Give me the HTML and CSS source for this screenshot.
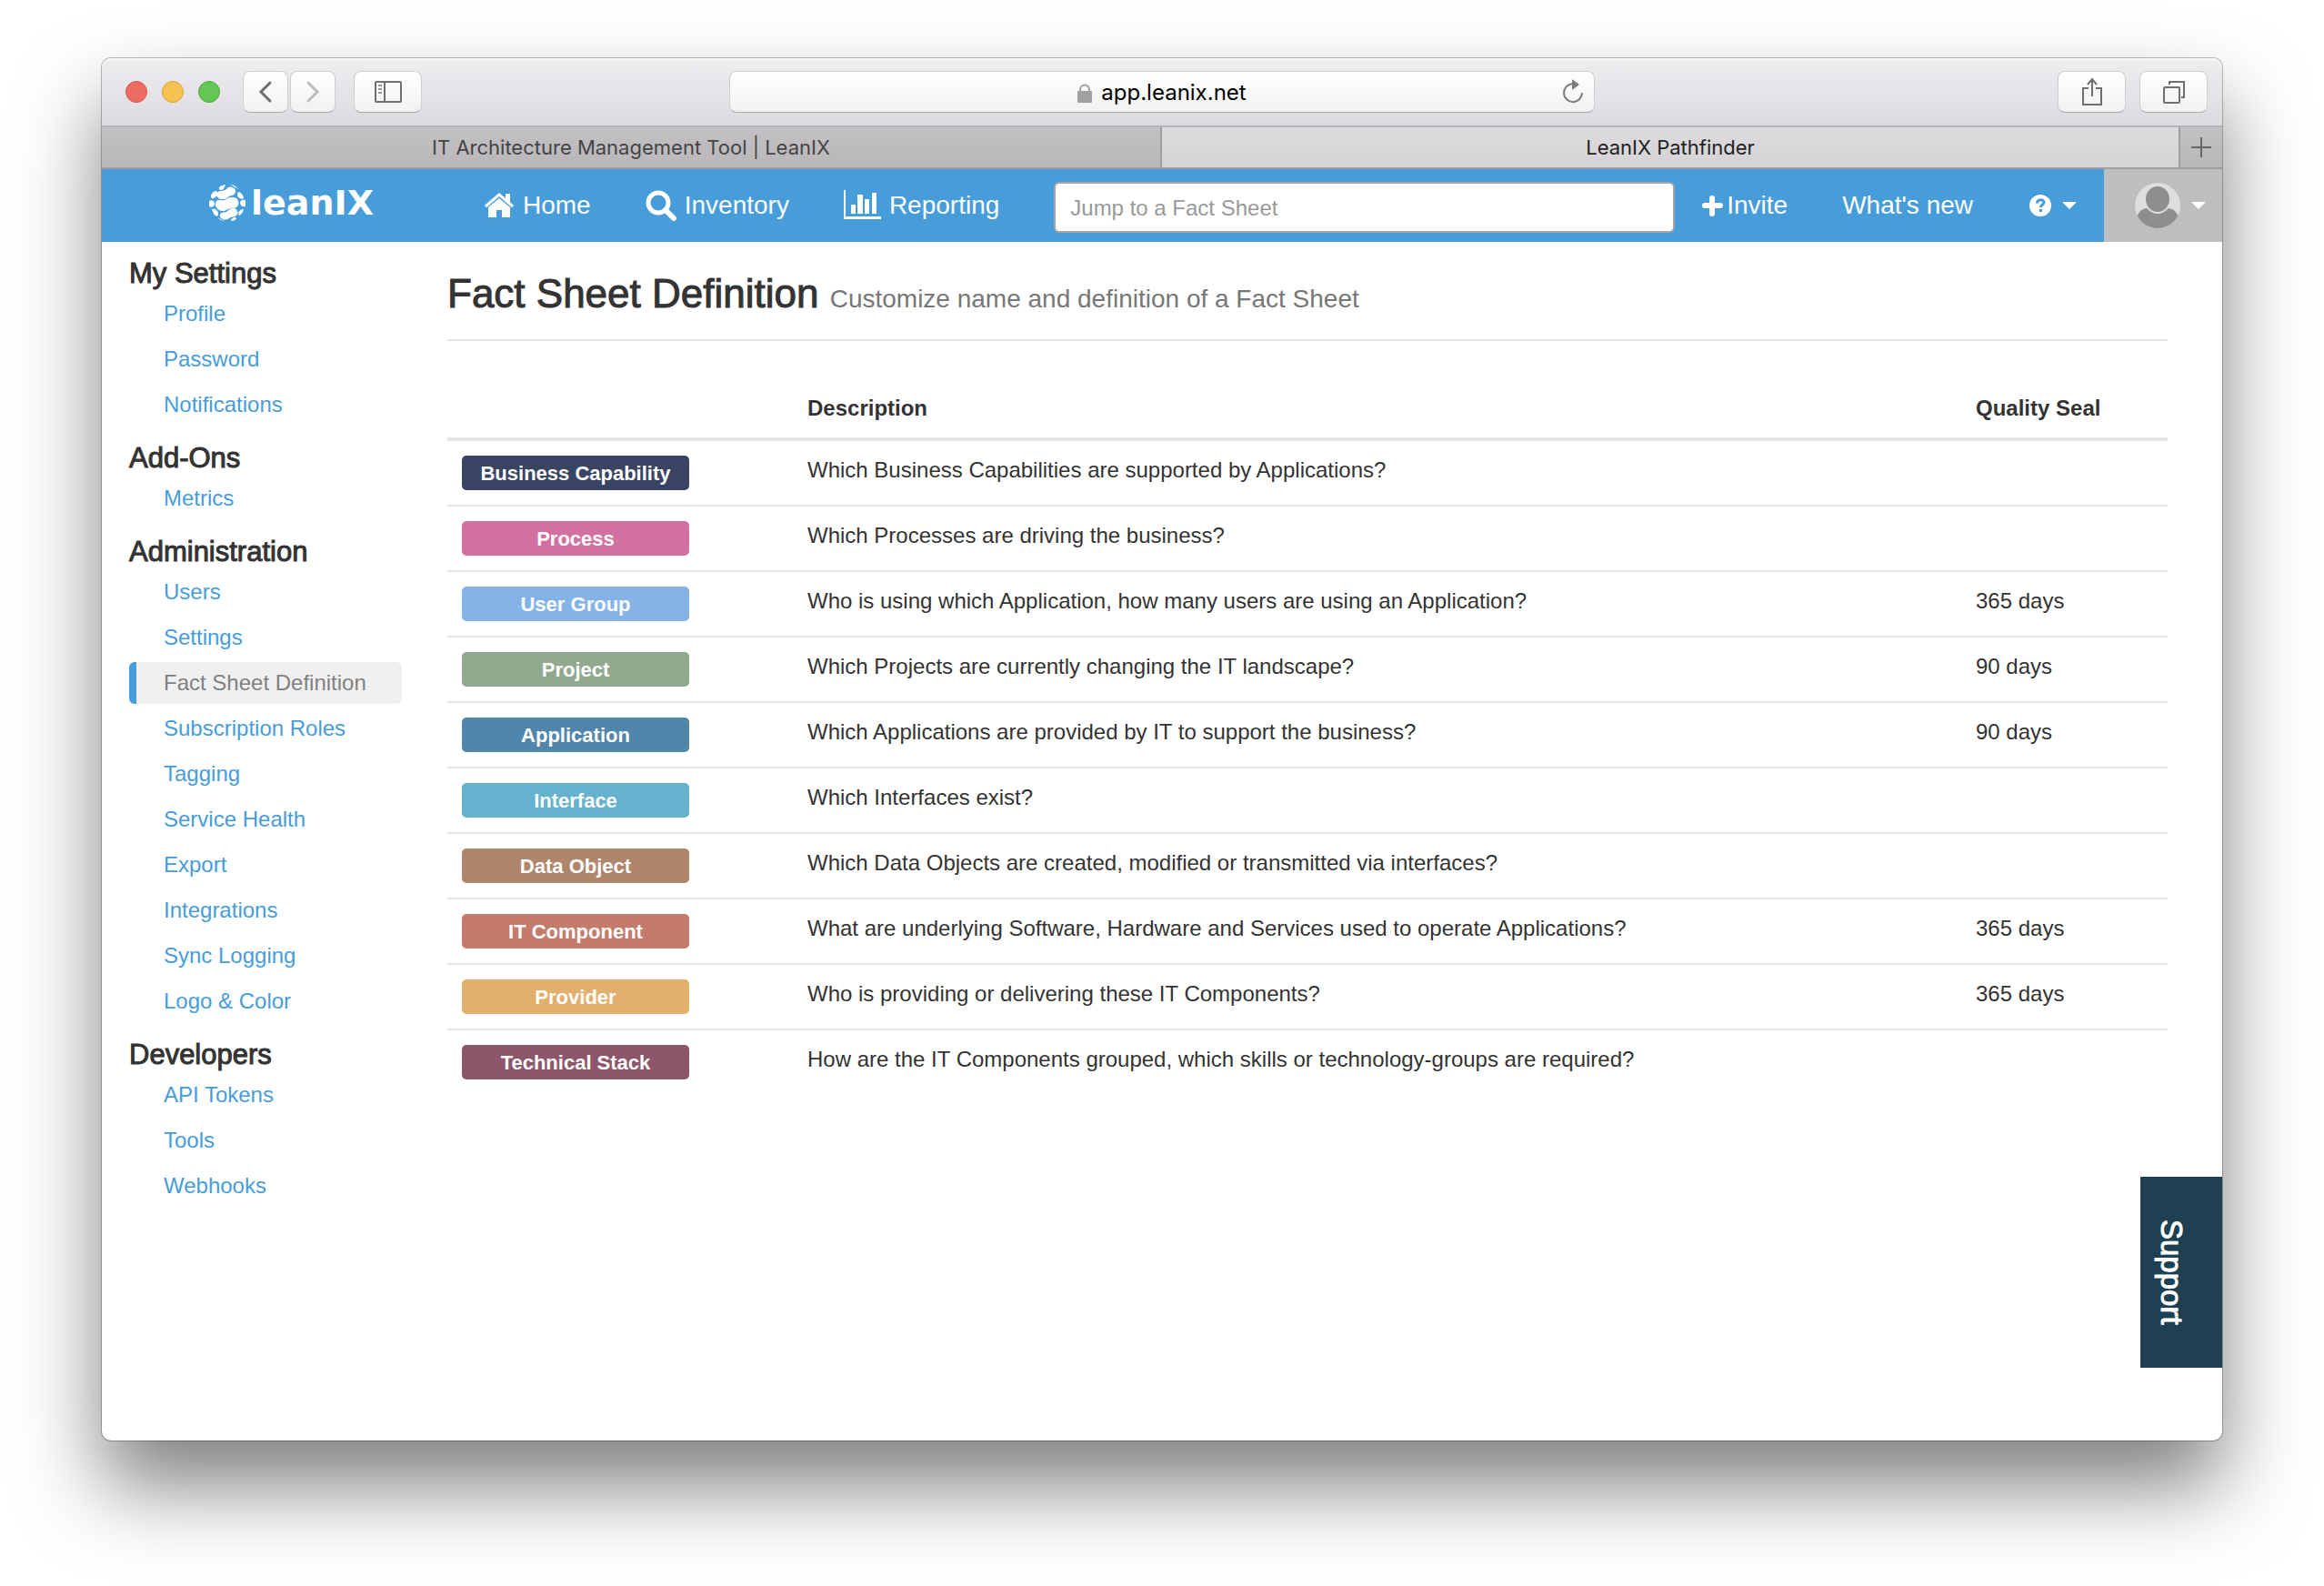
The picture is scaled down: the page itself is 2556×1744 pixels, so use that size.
FILE: index.html
```html
<!DOCTYPE html>
<html lang="en">
<head>
<meta charset="utf-8">
<title>LeanIX Pathfinder</title>
<link rel="stylesheet" href="styles.css">
</head>
<body>
<div class="window">
  <div class="toolbar">
    <div class="toolbar-left">
      <div class="lights"><span class="light red"></span><span class="light yellow"></span><span class="light green"></span></div>
      <div class="history">
        <button class="tool-btn narrow" aria-label="Back"><svg width="16" height="26" viewBox="0 0 16 26"><path d="M13 3 3 13l10 10" fill="none" stroke="#6f6f6f" stroke-width="3" stroke-linecap="round"/></svg></button>
        <button class="tool-btn narrow" aria-label="Forward"><svg width="16" height="26" viewBox="0 0 16 26"><path d="M3 3l10 10L3 23" fill="none" stroke="#bdbdbd" stroke-width="3" stroke-linecap="round"/></svg></button>
      </div>
      <button class="tool-btn" aria-label="Sidebar"><svg width="30" height="24" viewBox="0 0 30 24" fill="none" stroke="#6f6f6f" stroke-width="2"><rect x="1" y="1" width="28" height="22" rx="1"/><path d="M11 1v22"/><path d="M4 5h4M4 9h4M4 13h4" stroke="#999"/></svg></button>
    </div>
    <div class="address">
      <svg width="16" height="21" viewBox="0 0 16 21"><path d="M3 9V6.500a5 5 0 0 1 10 0V9" fill="none" stroke="#a0a0a0" stroke-width="2"/><rect y="8" width="16" height="13" rx="1" fill="#a0a0a0"/></svg>
      <span>app.leanix.net</span>
      <button class="reload" aria-label="Reload"><svg width="26" height="28" viewBox="0 0 26 28"><path d="M12 6.200a10 10 0 1 0 11 9.800" fill="none" stroke="#7d7d7d" stroke-width="2"/><path d="M12 1l8 6-8 6z" fill="#7d7d7d"/></svg></button>
    </div>
    <div class="toolbar-right">
      <button class="tool-btn" aria-label="Share"><svg width="24" height="32" viewBox="0 0 24 32" fill="none" stroke="#6f6f6f" stroke-width="2"><path d="M8 12H2v18h20V12h-6M12 21V3M7 8l5-6 5 6"/></svg></button>
      <button class="tool-btn" aria-label="Show all tabs"><svg width="26" height="26" viewBox="0 0 26 26" fill="none" stroke="#6f6f6f" stroke-width="2"><rect x="2" y="8" width="17" height="17" rx="1"/><path d="M8 5V2h16v17h-3"/></svg></button>
    </div>
  </div>
  <div class="tabs">
    <div class="tab">IT Architecture Management Tool | LeanIX</div>
    <div class="tab active">LeanIX Pathfinder</div>
    <button class="new-tab" aria-label="New tab"><svg width="22" height="22" viewBox="0 0 22 22"><path d="M11 0v22M0 11h22" stroke="#666" stroke-width="2"/></svg></button>
  </div>
  <header class="nav">
    <a class="logo" href="#">
      <svg width="40" height="40" viewBox="0 0 40 40">
        <g fill="#fff">
          <path d="M9 14c-2-3 0-7 4-7 4-1 5-1 7-3 3-3 9-1 9 3 0 5-5 5-7 6s-3 3-6 3-5 0-7-2z"/>
          <path d="M8 18c3-2 6 0 9-1 4-2 4-3 8-3 7-1 9 6 6 10-3 3-5 1-8 2-4 1-4 3-8 3-7 0-10-8-7-11z"/>
          <path d="M12 33c1-3 4-2 7-3 3-2 3-4 7-4 5 0 7 5 4 8-2 2-5 1-8 3-4 3-11 1-10-4z"/>
          <path d="M12 2c-2 2-1 4 1 4s4-2 5-6c-2 0-4 1-6 2zM24 0c2 2 6 3 8 5-1-2-5-5-8-5zM3 10c2-3 5-4 6-2s-1 6-4 7-4-2-2-5zM0 18c3-2 6 0 6 3s-3 5-6 3a20 20 0 0 1 0-6zM3 27c3-1 7 1 7 5s-3 3-5 0zM32 8c3 0 6 4 6 7-3 2-7-1-7-4zM40 17v7c-3 1-6-1-6-4s3-4 6-3zM38 27c-1 4-3 6-5 7-2-2 0-7 5-7zM24 40c0-3 3-4 5-4l1 2c-2 1-4 2-6 2zM10 36c2 2 4 3 7 4-2 0-6-1-7-4z"/>
        </g>
      </svg>
      <span class="wordmark">leanIX</span>
    </a>
    <a class="nav-item" href="#"><svg width="34" height="28" viewBox="0 0 34 28"><path d="M2 15 17 2l15 13" fill="none" stroke="#fff" stroke-width="3"/><path d="M24 1h5v11l-5-4zM5 16 17 6l12 10v11h-9v-8h-6v8H5z" fill="#fff"/></svg>Home</a>
    <a class="nav-item" href="#"><svg width="34" height="34" viewBox="0 0 34 34" fill="none" stroke="#fff"><circle cx="14" cy="14" r="11" stroke-width="5"/><path d="m22 22 9 9" stroke-width="6" stroke-linecap="round"/></svg>Inventory</a>
    <a class="nav-item" href="#"><svg width="41" height="34" viewBox="0 0 41 34" fill="#fff"><path d="M0 0h2v29h39v3H0zM8 16h5v10H8zM15 5h6v21h-6zM23 10h5v16h-5zM31 3h5v23h-5z"/></svg>Reporting</a>
    <form class="search"><input type="text" aria-label="Jump to a Fact Sheet" placeholder="Jump to a Fact Sheet"></form>
    <a class="nav-item tight" href="#"><svg width="23" height="23" viewBox="0 0 23 23"><path d="M11 3v17M3 11h17" stroke="#fff" stroke-width="6" stroke-linecap="round"/></svg>Invite</a>
    <a class="nav-item" href="#">What's new</a>
    <button class="nav-item help" aria-label="Help"><svg width="24" height="24" viewBox="0 0 24 24"><circle cx="12" cy="12" r="12" fill="#fff"/><path d="M8.500 9.500c0-5 7.500-4.500 7.500-1 0 2.500-3.500 2.500-3.500 5.500" fill="none" stroke="#479cda" stroke-width="3"/><path d="M11 16h3v3h-3z" fill="#479cda"/></svg><span class="caret"></span></button>
    <button class="account" aria-label="Account"><svg width="50" height="50" viewBox="0 0 50 50"><defs><clipPath id="disc"><circle cx="25" cy="25" r="25"/></clipPath></defs><g clip-path="url(#disc)"><path fill="#dedede" d="M0 0h50v50H0z"/><path d="M2 38c2-6 6-10 12-10 6 5 16 5 22 0 6 0 10 4 12 10L44 50H6z" fill="#8e8e8e"/><ellipse cx="25" cy="18" rx="14" ry="15" fill="#8e8e8e" stroke="#dedede" stroke-width="2"/></g></svg><span class="caret"></span></button>
  </header>
  <div class="page">
    <nav class="sidebar">
      <h2>My Settings</h2>
      <ul>
        <li><a href="#">Profile</a></li>
        <li><a href="#">Password</a></li>
        <li><a href="#">Notifications</a></li>
      </ul>
      <h2>Add-Ons</h2>
      <ul>
        <li><a href="#">Metrics</a></li>
      </ul>
      <h2>Administration</h2>
      <ul>
        <li><a href="#">Users</a></li>
        <li><a href="#">Settings</a></li>
        <li><a href="#" class="current">Fact Sheet Definition</a></li>
        <li><a href="#">Subscription Roles</a></li>
        <li><a href="#">Tagging</a></li>
        <li><a href="#">Service Health</a></li>
        <li><a href="#">Export</a></li>
        <li><a href="#">Integrations</a></li>
        <li><a href="#">Sync Logging</a></li>
        <li><a href="#">Logo &amp; Color</a></li>
      </ul>
      <h2>Developers</h2>
      <ul>
        <li><a href="#">API Tokens</a></li>
        <li><a href="#">Tools</a></li>
        <li><a href="#">Webhooks</a></li>
      </ul>
    </nav>
    <main class="content">
      <h1>Fact Sheet Definition <small>Customize name and definition of a Fact Sheet</small></h1>
      <table>
        <thead><tr><th class="col-type"></th><th>Description</th><th class="col-seal">Quality Seal</th></tr></thead>
        <tbody>
          <tr><td><span class="badge capability">Business Capability</span></td><td>Which Business Capabilities are supported by Applications?</td><td></td></tr>
          <tr><td><span class="badge process">Process</span></td><td>Which Processes are driving the business?</td><td></td></tr>
          <tr><td><span class="badge group">User Group</span></td><td>Who is using which Application, how many users are using an Application?</td><td>365 days</td></tr>
          <tr><td><span class="badge project">Project</span></td><td>Which Projects are currently changing the IT landscape?</td><td>90 days</td></tr>
          <tr><td><span class="badge application">Application</span></td><td>Which Applications are provided by IT to support the business?</td><td>90 days</td></tr>
          <tr><td><span class="badge interface">Interface</span></td><td>Which Interfaces exist?</td><td></td></tr>
          <tr><td><span class="badge data">Data Object</span></td><td>Which Data Objects are created, modified or transmitted via interfaces?</td><td></td></tr>
          <tr><td><span class="badge component">IT Component</span></td><td>What are underlying Software, Hardware and Services used to operate Applications?</td><td>365 days</td></tr>
          <tr><td><span class="badge provider">Provider</span></td><td>Who is providing or delivering these IT Components?</td><td>365 days</td></tr>
          <tr><td><span class="badge stack">Technical Stack</span></td><td>How are the IT Components grouped, which skills or technology-groups are required?</td><td></td></tr>
        </tbody>
      </table>
    </main>
  </div>
  <button class="support">Support</button>
</div>
</body>
</html>
```
FILE: styles.css
```css
* { box-sizing: border-box; }

body {
  margin: 0;
  padding: 64px 112px 160px;
  background: #fff;
  color: #333;
  font: 24px/32px "Liberation Sans", Arial, sans-serif;
}

button {
  margin: 0;
  padding: 0;
  border: 0;
  background: none;
  font: inherit;
  color: inherit;
}

a { color: #479cda; text-decoration: none; }
svg { display: block; flex: none; }

.window {
  position: relative;
  min-height: calc(100vh - 224px);
  border-radius: 10px;
  background: #fff;
  box-shadow: 0 0 0 1px rgba(0, 0, 0, .26), 0 50px 90px rgba(0, 0, 0, .5);
}

/* Browser toolbar */
.toolbar {
  display: grid;
  grid-template-columns: 1fr 952px 1fr;
  align-items: center;
  height: 76px;
  padding: 0 16px;
  border-bottom: 2px solid #b5b2b6;
  border-radius: 10px 10px 0 0;
  background: linear-gradient(#efedf0, #dddadf);
  box-shadow: inset 0 2px #f6f5f7;
}
.toolbar-left, .toolbar-right, .lights, .history { display: flex; align-items: center; }
.toolbar-left { gap: 20px; padding-left: 10px; }
.lights { gap: 16px; margin-right: 5px; }
.history { gap: 2px; }
.toolbar-right { justify-content: flex-end; gap: 15px; }
.light { width: 24px; height: 24px; border: 1px solid; border-radius: 50%; }
.red { background: #ed6b60; border-color: #d5544a; }
.yellow { background: #f6c350; border-color: #d9a13b; }
.green { background: #62c755; border-color: #4ba73c; }
.tool-btn, .address {
  display: flex;
  align-items: center;
  justify-content: center;
  height: 46px;
  border: 1px solid #d0ced1;
  border-bottom-color: #aaa8ab;
  border-radius: 8px;
  background: linear-gradient(#fff, #f1f1f1);
}
.tool-btn { width: 75px; }
.narrow { width: 50px; }
.address {
  position: relative;
  gap: 10px;
  padding-top: 2px;
  color: #000;
  font-family: Inter, "Liberation Sans", sans-serif;
}
.reload { position: absolute; right: 10px; top: 7px; }

.tabs {
  display: grid;
  grid-template-columns: 50% 1fr 48px;
  height: 46px;
  border-bottom: 2px solid #a19ea2;
  background: linear-gradient(#c2c0c3, #b9b7ba);
  font: 22px/44px Inter, "Liberation Sans", sans-serif;
  text-align: center;
  color: #444;
}
.tab { border-right: 2px solid #a19ea2; }
.tab.active {
  border-right: 0;
  background: linear-gradient(#dddbde, #d5d3d6);
  color: #222;
}
.new-tab {
  display: flex;
  align-items: center;
  justify-content: center;
  border-left: 2px solid #a19ea2;
}

/* Application header */
.nav {
  display: flex;
  align-items: center;
  height: 80px;
  background: #479cda;
  color: #fff;
  font-size: 28px;
}
.logo {
  display: flex;
  align-items: center;
  gap: 6px;
  width: 390px;
  padding: 0 0 6px 118px;
  color: #fff;
}
.wordmark { font: bold 38px/40px "DejaVu Sans", sans-serif; }
.nav-item {
  display: flex;
  align-items: center;
  gap: 9px;
  padding: 0 30px;
  color: #fff;
  white-space: nowrap;
}
.nav-item.tight { gap: 4px; }
.nav-item.help { gap: 12px; padding-left: 32px; }
.search { flex: 1; margin-left: 30px; padding-top: 4px; }
.search input {
  display: block;
  width: 100%;
  height: 56px;
  padding: 2px 16px 0;
  border: 2px solid #a5a5a5;
  border-radius: 6px;
  background: #fff;
  color: #333;
  font: inherit;
  font-size: 24px;
}
.search input::placeholder { color: #999; opacity: 1; }
.caret {
  border: 8px solid transparent;
  border-top-color: #fff;
  border-bottom: 0;
}
.account {
  display: flex;
  align-items: center;
  justify-content: center;
  gap: 12px;
  width: 130px;
  height: 80px;
  padding-left: 16px;
  background: #bebebe;
}

/* Page */
.page { display: flex; gap: 50px; padding: 14px 60px 0 30px; }
.sidebar { flex: none; width: 300px; }
.sidebar h2 {
  margin: 0;
  font-size: 31px;
  line-height: 42px;
  font-weight: normal;
  -webkit-text-stroke: 1px currentColor;
}
.sidebar ul {
  display: grid;
  gap: 4px;
  margin: 0 0 15px;
  padding: 0;
  list-style: none;
}
.sidebar li a {
  display: block;
  padding-left: 30px;
  border-left: 8px solid transparent;
  border-radius: 6px;
  line-height: 46px;
}
.sidebar .current { border-color: #479cda; background: #f0f0f0; color: #808080; }

.content { flex: 1; min-width: 0; }
.content h1 {
  margin: 0;
  padding: 13px 0 14px;
  border-bottom: 2px solid #e5e5e5;
  font-size: 44px;
  line-height: 60px;
  font-weight: normal;
  -webkit-text-stroke: 1px currentColor;
}
.content small { font-size: 28px; color: #777; -webkit-text-stroke: 0; }

table {
  width: 100%;
  margin-top: 42px;
  border-collapse: separate;
  border-spacing: 0;
  table-layout: fixed;
}
th, td { padding: 16px; text-align: left; vertical-align: top; }
th { border-bottom: 4px solid #e5e5e5; }
td { height: 72px; border-bottom: 2px solid #e5e5e5; }
tbody tr:last-child td { border-bottom: 0; }
.col-type { width: 380px; }
.col-seal { width: 227px; }
.badge {
  display: block;
  width: 250px;
  padding-top: 2px;
  border-radius: 5px;
  color: #fff;
  font-size: 22px;
  line-height: 36px;
  font-weight: bold;
  text-align: center;
}
.capability { background: #394463; }
.process { background: #d2719f; }
.group { background: #84b4e5; }
.project { background: #91aa8f; }
.application { background: #5086ab; }
.interface { background: #64b2cd; }
.data { background: #af866b; }
.component { background: #c57b6c; }
.provider { background: #e2af6d; }
.stack { background: #8d566a; }

.support {
  position: absolute;
  right: 0;
  bottom: 80px;
  width: 90px;
  height: 210px;
  padding-right: 22px;
  background: #1e4052;
  color: #fff;
  font-size: 33px;
  line-height: 68px;
  writing-mode: vertical-rl;
  text-align: center;
  -webkit-text-stroke: 1px currentColor;
}
```
